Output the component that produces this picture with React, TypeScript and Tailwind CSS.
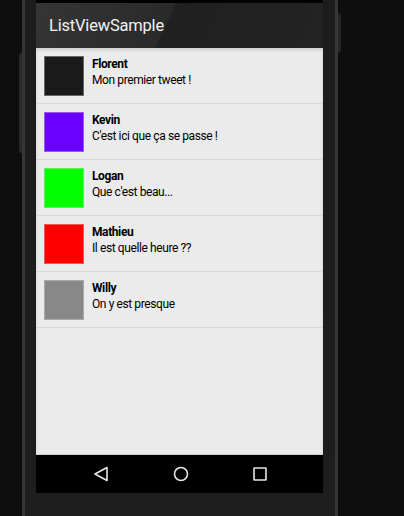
const tweets = [
    { name: 'Florent', text: 'Mon premier tweet !', color: 'bg-[#1a1a1a]' },
    { name: 'Kevin', text: "C'est ici que ça se passe !", color: 'bg-[#6a00ff]' },
    { name: 'Logan', text: "Que c'est beau...", color: 'bg-[#00ff00]' },
    { name: 'Mathieu', text: 'Il est quelle heure ??', color: 'bg-[#ff0000]' },
    { name: 'Willy', text: 'On y est presque', color: 'bg-[#888888]' },
]

// Nav icons
const BackIcon = () => (
    <svg width="16" height="16" viewBox="0 0 16 16" fill="none" stroke="#e6e6e6" strokeWidth={1.6}>
        <path d="M14 1.5 L2 8 L14 14.5 Z" strokeLinejoin="round" />
    </svg>
)

const HomeIcon = () => (
    <svg width="16" height="16" viewBox="0 0 16 16" fill="none" stroke="#e6e6e6" strokeWidth={1.6}>
        <circle cx="8" cy="8" r="6.5" />
    </svg>
)

const RecentsIcon = () => (
    <svg width="14" height="14" viewBox="0 0 14 14" fill="none" stroke="#e6e6e6" strokeWidth={1.6}>
        <rect x="1" y="1" width="12" height="12" rx="0.5" />
    </svg>
)

export default function App() {
    return (
        <div className="w-[404px] h-[516px] overflow-hidden bg-[#0e0e0e] flex font-['Roboto',sans-serif]">
            {/* Side button */}
            <div className="ml-[19px] mt-[53px] w-[3px] h-[100px] bg-[#2a2a2a] rounded-l-sm" />

            {/* Phone body */}
            <div className="w-[316px] h-full border-x-[3px] border-[#363636] bg-gradient-to-b from-[#1c1c1c] to-[#1e1e1e] pl-[11px] pr-[12px]">
                <div className="w-[287px] flex flex-col">
                    {/* Status bar */}
                    <div className="h-[3px] bg-black" />

                    {/* Action bar */}
                    <div className="h-[45px] flex items-center px-[13px] bg-[linear-gradient(115deg,#353535_0%,#2a2a2a_45%,#202020_46%,#232323_100%)]">
                        <span className="text-[16.5px] tracking-[-0.2px] text-[#f2f2f2] pt-[1px]">ListViewSample</span>
                    </div>

                    {/* List */}
                    <div className="h-[407px] bg-[#ebebeb] border-b border-[#cfcfcf] shadow-[inset_0_2px_3px_rgba(0,0,0,0.12)]">
                        {tweets.map((t) => (
                            <div key={t.name} className="h-[56px] flex items-start px-2 pt-2 border-b border-[#d8d8d8]">
                                <div className={`w-10 h-10 ${t.color} border border-[#dcdcdc]/40 shrink-0`} />
                                <div className="ml-2 flex flex-col leading-[16px] text-black tracking-[-0.4px]">
                                    <span className="text-[12px] font-bold">{t.name}</span>
                                    <span className="text-[12px]">{t.text}</span>
                                </div>
                            </div>
                        ))}
                    </div>

                    {/* Nav bar */}
                    <div className="h-[38px] bg-black flex items-center justify-center gap-16">
                        <BackIcon />
                        <HomeIcon />
                        <RecentsIcon />
                    </div>
                </div>
            </div>

            {/* Right button */}
            <div className="mt-[13px] w-[3px] h-[40px] bg-[#262626] rounded-r-sm" />
        </div>
    )
}
